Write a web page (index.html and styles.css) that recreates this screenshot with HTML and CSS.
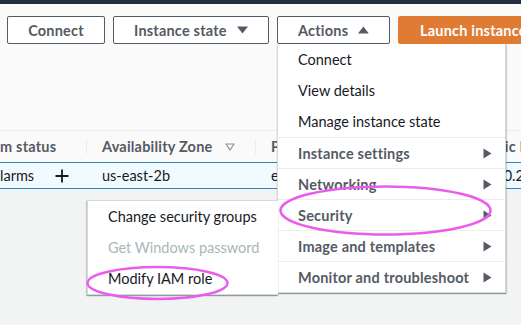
FILE: index.html
```html
<!DOCTYPE html>
<html>
<head>
<meta charset="utf-8">
<link rel="stylesheet" href="styles.css">
</head>
<body>
<div class="page">
  <div class="topbar"></div>
  <div class="upper">
    <div class="toolbar">
      <button class="btn btn-connect">Connect</button>
      <button class="btn btn-state">Instance state
        <svg class="caret" width="11" height="8" viewBox="0 0 11 8"><path d="M0 0.5H11L5.5 7.5Z" fill="#545b64"/></svg>
      </button>
      <div class="actions">
        <button class="btn btn-actions">Actions
          <svg class="caret" width="11" height="8" viewBox="0 0 11 8"><path d="M0 7.5H11L5.5 0.5Z" fill="#545b64"/></svg>
        </button>
        <div class="menu">
          <div class="item">Connect</div>
          <div class="item">View details</div>
          <div class="item">Manage instance state</div>
          <div class="item group">Instance settings <svg class="arrow" width="9" height="11" viewBox="0 0 9 11"><path d="M0.5 0.5L8.5 5.5L0.5 10.5Z" fill="#545b64"/></svg></div>
          <div class="item group">Networking <svg class="arrow" width="9" height="11" viewBox="0 0 9 11"><path d="M0.5 0.5L8.5 5.5L0.5 10.5Z" fill="#545b64"/></svg></div>
          <div class="item group security">Security <svg class="arrow" width="9" height="11" viewBox="0 0 9 11"><path d="M0.5 0.5L8.5 5.5L0.5 10.5Z" fill="#545b64"/></svg>
            <div class="submenu">
              <div class="subitem">Change security groups</div>
              <div class="subitem disabled">Get Windows password</div>
              <div class="subitem">Modify IAM role</div>
            </div>
          </div>
          <div class="item group">Image and templates <svg class="arrow" width="9" height="11" viewBox="0 0 9 11"><path d="M0.5 0.5L8.5 5.5L0.5 10.5Z" fill="#545b64"/></svg></div>
          <div class="item group">Monitor and troubleshoot <svg class="arrow" width="9" height="11" viewBox="0 0 9 11"><path d="M0.5 0.5L8.5 5.5L0.5 10.5Z" fill="#545b64"/></svg></div>
        </div>
      </div>
      <button class="btn btn-primary">Launch instances</button>
    </div>
    <div class="thead">
      <div class="cell c1">m status</div>
      <div class="cell c2"><span>Availability Zone</span>
        <svg class="sort" width="10" height="8" viewBox="0 0 10 8"><path d="M1 1H9L5 7Z" fill="none" stroke="#879596" stroke-width="1.2" stroke-linejoin="round"/></svg>
      </div>
      <div class="cell c3">Public IPv4 DNS</div>
      <div class="cell c4">Public IPv4 address</div>
    </div>
  </div>
  <div class="trow">
    <div class="cell c1"><span>larms</span>
      <svg class="plus" width="14" height="14" viewBox="0 0 14 14"><path d="M7 0.5V13.5M0.5 7H13.5" stroke="#16191f" stroke-width="1.8"/></svg>
    </div>
    <div class="cell c2">us-east-2b</div>
    <div class="cell c3">ec2-3-20-24-155.us-east-2</div>
    <div class="cell c4">3.140.2.24</div>
  </div>
  <div class="rest"></div>
  <svg class="annot" width="521" height="325" viewBox="0 0 521 325">
    <ellipse cx="385.5" cy="210.5" rx="105" ry="24" fill="none" stroke="#ec5cec" stroke-width="2.5"/>
    <ellipse cx="157.5" cy="283" rx="70" ry="16" fill="none" stroke="#ec5cec" stroke-width="2.5"/>
  </svg>
</div>
</body>
</html>
```
FILE: styles.css
```css
* { box-sizing: border-box; }
html, body { margin: 0; padding: 0; }
body {
  width: 521px;
  height: 325px;
  overflow: hidden;
  background: #f2f3f3;
  font-family: Lato, "Open Sans", sans-serif;
  font-size: 14.5px;
  color: #16191f;
}
.page { position: relative; width: 521px; height: 325px; overflow: hidden; }
.topbar { height: 4px; background: #232f3e; }
.upper { background: #fafafa; }
.toolbar {
  display: flex;
  gap: 8px;
  padding: 12px 0 0 7px;
  height: 126px;
  align-items: flex-start;
  white-space: nowrap;
}
.btn {
  height: 28px;
  border: 1px solid #545b64;
  border-radius: 2px;
  background: #fff;
  font-family: inherit;
  font-size: 14.5px;
  font-weight: 700;
  color: #545b64;
  padding: 0 20px;
  display: flex;
  align-items: center;
  gap: 10px;
  flex: none;
  letter-spacing: 0.2px;
}
.btn-connect { width: 98px; justify-content: center; padding: 0; }
.btn-state { width: 156px; }
.btn-actions { width: 113px; }
.btn-primary {
  background: #e07b33;
  border-color: #e07b33;
  color: #fff;
  padding-left: 21px;
  width: 140px;
}
.actions { position: relative; flex: none; }
.menu {
  position: absolute;
  top: 28px;
  left: 0;
  width: 229px;
  background: #fff;
  border: 1px solid #d5dbdb;
  border-top: 0;
  box-shadow: 0 1px 1px 0 rgba(0,28,36,0.3), 1px 1px 1px 0 rgba(0,28,36,0.15);
  z-index: 5;
}
.item {
  height: 31px;
  display: flex;
  align-items: center;
  justify-content: space-between;
  padding: 0 13px 0 20px;
  color: #16191f;
  font-weight: 400;
}
.item.group {
  border-top: 1px solid #eaeded;
  font-weight: 700;
  color: #545b64;
  letter-spacing: 0.2px;
}
.security { position: relative; }
.submenu {
  position: absolute;
  top: 0;
  right: 100%;
  width: 191px;
  background: #fff;
  border: 1px solid #d5dbdb;
  border-right: 0;
  box-shadow: 0 1px 1px 0 rgba(0,28,36,0.3), -1px 1px 1px 0 rgba(0,28,36,0.15);
  letter-spacing: 0;
}
.subitem {
  height: 31px;
  display: flex;
  align-items: center;
  padding-left: 20px;
  font-weight: 400;
  color: #16191f;
}
.subitem.disabled { color: #aab7b8; }
.thead, .trow {
  display: flex;
  white-space: nowrap;
}
.thead {
  height: 32px;
  border-top: 1px solid #eaeded;
  font-weight: 700;
  color: #545b64;
  align-items: center;
  letter-spacing: 0.2px;
}
.trow {
  height: 27px;
  background: #f1faff;
  border-top: 1px solid #2e86c1;
  border-bottom: 1px solid #2e86c1;
  align-items: center;
}
.cell {
  display: flex;
  align-items: center;
  overflow: hidden;
  flex: none;
  padding-left: 16px;
  position: relative;
}
.c1 { width: 86px; padding-left: 0; }
.c2 { width: 169px; }
.c3 { width: 204px; }
.c4 { width: 120px; }
.thead .c2::before, .thead .c3::before, .thead .c4::before {
  content: "";
  position: absolute;
  left: 0;
  top: 0;
  bottom: 0;
  width: 1px;
  background: #eaeded;
}
.thead .cell { height: 15px; overflow: visible; }
.sort { margin-left: 13px; }
.trow .c1 span { width: 55px; }
.plus { flex: none; }
.rest { height: 140px; }
.annot { position: absolute; left: 0; top: 0; pointer-events: none; z-index: 10; }
```
